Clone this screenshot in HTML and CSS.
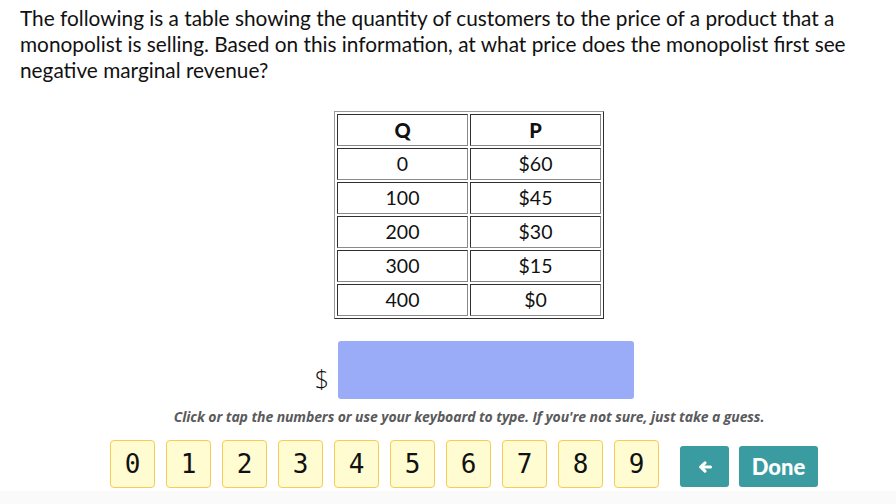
FILE: index.html
```html
<!DOCTYPE html>
<html>
<head>
<meta charset="utf-8">
<link rel="stylesheet" href="styles.css">
</head>
<body>
<div class="page">
  <p class="question">The following is a table showing the quantity of customers to the price of a product that a<br>monopolist is selling. Based on this information, at what price does the monopolist first see<br>negative marginal revenue?</p>
  <div class="table-wrap">
    <table class="data">
      <tr><th>Q</th><th>P</th></tr>
      <tr><td>0</td><td>$60</td></tr>
      <tr><td>100</td><td>$45</td></tr>
      <tr><td>200</td><td>$30</td></tr>
      <tr><td>300</td><td>$15</td></tr>
      <tr><td>400</td><td>$0</td></tr>
    </table>
  </div>
  <div class="answer-row">
    <span class="currency">$</span>
    <div class="answer-box"></div>
  </div>
  <p class="hint">Click or tap the numbers or use your keyboard to type. If you're not sure, just take a guess.</p>
  <div class="keypad">
    <div class="digits">
      <button class="key">0</button>
      <button class="key">1</button>
      <button class="key">2</button>
      <button class="key">3</button>
      <button class="key">4</button>
      <button class="key">5</button>
      <button class="key">6</button>
      <button class="key">7</button>
      <button class="key">8</button>
      <button class="key">9</button>
    </div>
    <button class="action back" aria-label="Backspace">
      <svg width="14" height="12" viewBox="0 0 14 12"><path d="M12.5 6H3M7 1.8L2.6 6L7 10.2" fill="none" stroke="#fff" stroke-width="3" stroke-linecap="round" stroke-linejoin="round"/></svg>
    </button>
    <button class="action done">Done</button>
  </div>
</div>
<div class="footer"></div>
</body>
</html>
```
FILE: styles.css
```css
html, body {
  margin: 0;
  padding: 0;
  background: #ffffff;
}
body {
  width: 896px;
  height: 504px;
  overflow: hidden;
  display: flex;
  flex-direction: column;
}
.page {
  flex: 1;
  display: flex;
  flex-direction: column;
}
.question {
  margin: 0;
  padding: 5px 20px 0 20px;
  font-family: Lato, "Liberation Sans", sans-serif;
  font-size: 20.8px;
  line-height: 26px;
  color: #111;
}
.table-wrap {
  display: flex;
  justify-content: center;
  padding-left: 42px;
  margin-top: 28px;
}
.data {
  border-collapse: separate;
  border-spacing: 2px;
  border-style: solid;
  border-width: 1px;
  border-color: #9a9a9a #303030 #303030 #9a9a9a;
  font-family: Lato, "Liberation Sans", sans-serif;
  font-size: 19.5px;
  color: #111;
}
.data th, .data td {
  width: 129px;
  height: 30px;
  padding: 0;
  text-align: center;
  border-style: solid;
  border-width: 1px;
  border-color: #303030 #8a8a8a #8a8a8a #303030;
  line-height: 30px;
}
.data th {
  font-weight: 900;
  font-size: 20px;
}
.answer-row {
  display: flex;
  justify-content: center;
  align-items: center;
  margin-top: 22px;
  padding-left: 53px;
}
.currency {
  font-family: "Open Sans", "DejaVu Sans", sans-serif;
  font-size: 25px;
  font-weight: 300;
  color: #111;
  margin-right: 9px;
  margin-top: 16px;
}
.answer-box {
  width: 296px;
  height: 58px;
  background: #9aabf8;
  border-radius: 3px;
}
.hint {
  margin: 8px 0 0 0;
  padding-left: 42px;
  text-align: center;
  font-family: "Open Sans", "DejaVu Sans", sans-serif;
  font-size: 14px;
  line-height: 20px;
  font-weight: 700;
  font-style: italic;
  color: #5a5a5c;
  letter-spacing: -0.1px;
}
.keypad {
  display: flex;
  justify-content: center;
  align-items: flex-start;
  padding-left: 32px;
  margin-top: 13px;
}
.digits {
  display: flex;
  gap: 11px;
  margin-right: 21px;
}
.key {
  width: 45px;
  height: 48px;
  padding: 0;
  background: #fffcd2;
  border: 1px solid #f7cb55;
  border-radius: 4px;
  font-family: "DejaVu Sans Mono", monospace;
  font-size: 26px;
  color: #111;
  display: flex;
  align-items: center;
  justify-content: center;
}
.action {
  height: 41px;
  margin-top: 6px;
  padding: 0;
  border: none;
  border-radius: 3px;
  background: #3a9ca0;
  color: #fff;
  display: flex;
  align-items: center;
  justify-content: center;
}
.back {
  width: 49px;
  margin-right: 10px;
}
.done {
  width: 79px;
  font-family: Lato, "Liberation Sans", sans-serif;
  font-weight: 900;
  font-size: 22px;
}
.footer {
  height: 13px;
  background: #fafafa;
}
```
